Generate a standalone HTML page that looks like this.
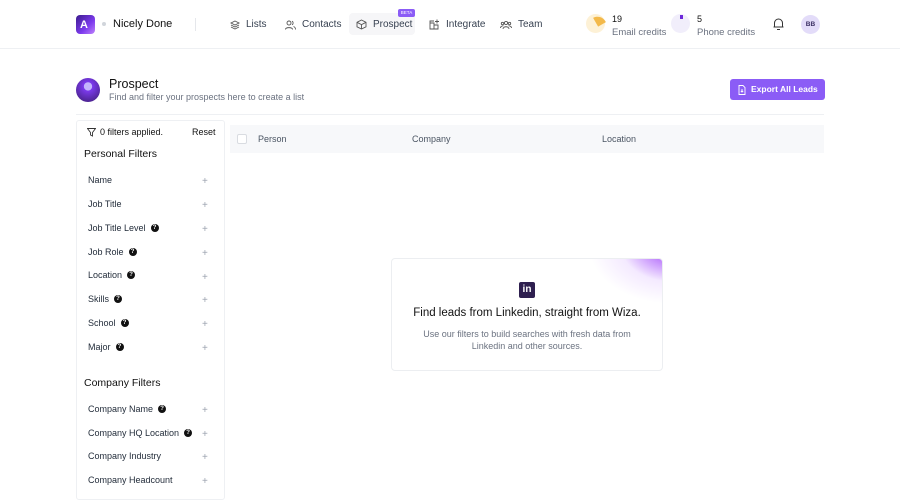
<!DOCTYPE html>
<html><head><meta charset="utf-8"><style>
*{box-sizing:border-box;margin:0;padding:0}
body{width:900px;height:484px;overflow:hidden;background:#fff;font-family:"Liberation Sans",sans-serif;color:#1f2937;position:relative}
.a{position:absolute}
.nav{font-size:10px;color:#374151;display:flex;align-items:center;gap:6px}
.f{position:absolute;left:88px;font-size:9px;color:#1f2937;display:flex;align-items:center;gap:5px}
.q{width:8px;height:8px;border-radius:50%;background:#111;color:#fff;font-size:6px;font-weight:bold;display:inline-flex;align-items:center;justify-content:center}
.p{position:absolute;left:202px;font-size:10px;color:#9ca3af}
</style></head><body>
<div class="a" style="left:0;top:48px;width:900px;height:1px;background:#eef0f3"></div>
<div class="a" style="left:76px;top:15px;width:19px;height:19px;border-radius:4px;background:linear-gradient(135deg,#3b1c8c,#7c3aed 60%,#c084fc)"></div>
<div class="a" style="left:80px;top:19px;color:#fff;font-size:11px;font-weight:bold">A</div>
<div class="a" style="left:102px;top:22px;width:4px;height:4px;border-radius:50%;background:#d1d5db"></div>
<div class="a" style="left:113px;top:18px;font-size:11px;color:#111">Nicely Done</div>
<div class="a" style="left:195px;top:18px;width:1px;height:13px;background:#e5e7eb"></div>
<div class="a nav" style="left:230px;top:19px"><svg width="10" height="10" viewBox="0 0 10 10" fill="none" stroke="#555" stroke-width=".9"><path d="M5 1 9 3 5 5 1 3Z M1 5 5 7 9 5 M1 7 5 9 9 7"/></svg>Lists</div>
<div class="a nav" style="left:285px;top:19px"><svg width="11" height="10" viewBox="0 0 11 10" fill="none" stroke="#555" stroke-width=".9"><circle cx="4" cy="3" r="2"/><path d="M0.5 9.5c0-2.5 7-2.5 7 0M7 1.2a2 2 0 010 3.6M8.5 6.5c1.5.5 2 1.5 2 3"/></svg>Contacts</div>
<div class="a" style="left:349px;top:13px;width:66px;height:22px;background:#f6f6f8;border-radius:4px"></div>
<div class="a" style="left:398px;top:9px;width:17px;height:8px;background:#8b5cf6;border-radius:2px;color:#fff;font-size:4.5px;text-align:center;line-height:8px">BETA</div>
<div class="a nav" style="left:356px;top:19px"><svg width="11" height="11" viewBox="0 0 11 11" fill="none" stroke="#555" stroke-width=".9"><path d="M5.5 1 10 3.3v4.5L5.5 10 1 7.8V3.3Z M1 3.3 5.5 5.6 10 3.3M5.5 5.6V10"/></svg>Prospect</div>
<div class="a nav" style="left:429px;top:19px"><svg width="11" height="11" viewBox="0 0 11 11" fill="none" stroke="#555" stroke-width=".9"><path d="M1 4h4v6H1zM5 6h4v4H5zM1 4V2h4M8 0.5v4M6 2.5h4"/></svg>Integrate</div>
<div class="a nav" style="left:500px;top:19px"><svg width="12" height="10" viewBox="0 0 12 10" fill="none" stroke="#555" stroke-width=".9"><circle cx="6" cy="3" r="1.6"/><circle cx="2.5" cy="3.5" r="1.2"/><circle cx="9.5" cy="3.5" r="1.2"/><path d="M3 9c0-3 6-3 6 0M0.5 8c0-2 2.5-2.3 3-2M11.5 8c0-2-2.5-2.3-3-2"/></svg>Team</div>
<div class="a" style="left:586px;top:14px;width:19px;height:19px;border-radius:50%;background:#fdf1d6"></div>
<div class="a" style="left:595px;top:15px;width:9px;height:10px;border-radius:0 9px 0 0;background:#f3b94a;transform:rotate(-30deg)"></div>
<div class="a" style="left:612px;top:14px;font-size:9px;color:#111">19</div>
<div class="a" style="left:612px;top:27px;font-size:9.5px;color:#6b7280">Email credits</div>
<div class="a" style="left:671px;top:14px;width:19px;height:19px;border-radius:50%;background:#f1eefb"></div>
<div class="a" style="left:680px;top:15px;width:3px;height:4px;background:#6d28d9"></div>
<div class="a" style="left:697px;top:14px;font-size:9px;color:#111">5</div>
<div class="a" style="left:697px;top:27px;font-size:9.5px;color:#6b7280">Phone credits</div>
<svg class="a" style="left:772px;top:17px" width="13" height="14" viewBox="0 0 13 14" fill="none" stroke="#333" stroke-width="1"><path d="M2.5 10V6a4 4 0 018 0v4H2.5zM1.5 10h10M5 12.5h3"/></svg>
<div class="a" style="left:801px;top:15px;width:19px;height:19px;border-radius:50%;background:#e3dcf9;font-size:6.5px;font-weight:bold;color:#3b2f63;text-align:center;line-height:19px">BB</div>

<div class="a" style="left:76px;top:78px;width:24px;height:24px;border-radius:50%;background:radial-gradient(circle at 50% 35%,#c4b5fd 0 20%,#7c3aed 22%,#3b1c70)"></div>
<div class="a" style="left:109px;top:77px;font-size:12.5px;color:#111">Prospect</div>
<div class="a" style="left:109px;top:92px;font-size:9px;color:#6b7280">Find and filter your prospects here to create a list</div>
<div class="a" style="left:730px;top:79px;width:95px;height:21px;background:#8b5cf6;border-radius:3px;color:#fff;font-size:8.5px;font-weight:bold;line-height:21px;padding-left:21px;white-space:nowrap">Export All Leads</div>
<svg class="a" style="left:738px;top:85px" width="8" height="10" viewBox="0 0 8 10" fill="none" stroke="#fff" stroke-width=".9"><path d="M1 .5h4l2 2v7H1z M4 4v3M2.8 6 4 7 5.2 6"/></svg>
<div class="a" style="left:76px;top:114px;width:748px;height:1px;background:#eef0f3"></div>

<div class="a" style="left:76px;top:120px;width:149px;height:380px;border:1px solid #eef0f3;border-radius:3px"></div>
<svg class="a" style="left:87px;top:128px" width="9" height="9" viewBox="0 0 9 9" fill="none" stroke="#333" stroke-width=".9"><path d="M.5.5h8L5.5 4.5V8L3.5 7V4.5Z"/></svg>
<div class="a" style="left:100px;top:127px;font-size:9px;color:#111">0 filters applied.</div>
<div class="a" style="left:192px;top:127px;font-size:9px;color:#111">Reset</div>
<div class="a" style="left:84px;top:148px;font-size:10.5px;color:#111">Personal Filters</div>
<div class="f" style="top:175px">Name</div><div class="p" style="top:176px">+</div>
<div class="f" style="top:199px">Job Title</div><div class="p" style="top:200px">+</div>
<div class="f" style="top:223px">Job Title Level <span class="q">?</span></div><div class="p" style="top:224px">+</div>
<div class="f" style="top:247px">Job Role <span class="q">?</span></div><div class="p" style="top:248px">+</div>
<div class="f" style="top:270px">Location <span class="q">?</span></div><div class="p" style="top:272px">+</div>
<div class="f" style="top:294px">Skills <span class="q">?</span></div><div class="p" style="top:295px">+</div>
<div class="f" style="top:318px">School <span class="q">?</span></div><div class="p" style="top:319px">+</div>
<div class="f" style="top:342px">Major <span class="q">?</span></div><div class="p" style="top:343px">+</div>
<div class="a" style="left:84px;top:377px;font-size:10.5px;color:#111">Company Filters</div>
<div class="f" style="top:404px">Company Name <span class="q">?</span></div><div class="p" style="top:405px">+</div>
<div class="f" style="top:428px">Company HQ Location <span class="q">?</span></div><div class="p" style="top:429px">+</div>
<div class="f" style="top:451px">Company Industry</div><div class="p" style="top:452px">+</div>
<div class="f" style="top:475px">Company Headcount</div><div class="p" style="top:476px">+</div>

<div class="a" style="left:230px;top:125px;width:594px;height:28px;background:#f7f8fa"></div>
<div class="a" style="left:237px;top:134px;width:10px;height:10px;border:1px solid #d9dce1;border-radius:2px;background:#fff"></div>
<div class="a" style="left:258px;top:134px;font-size:9px;color:#4b5563">Person</div>
<div class="a" style="left:412px;top:134px;font-size:9px;color:#4b5563">Company</div>
<div class="a" style="left:602px;top:134px;font-size:9px;color:#4b5563">Location</div>

<div class="a" style="left:391px;top:258px;width:272px;height:113px;border:1px solid #eceef1;border-radius:4px;overflow:hidden;background:#fff">
<div class="a" style="left:190px;top:-40px;width:120px;height:90px;background:radial-gradient(ellipse at 75% 30%,#a855f7 0,#c084fc 18%,rgba(233,213,255,.5) 40%,rgba(255,255,255,0) 65%)"></div>
</div>
<div class="a" style="left:519px;top:282px;width:16px;height:16px;background:#2e1f4f;border-radius:2px;color:#fff;font-size:10px;font-weight:bold;text-align:center;line-height:16px">in</div>
<div class="a" style="left:391px;top:307px;width:272px;text-align:center;font-size:11.5px;color:#111">Find leads from Linkedin, straight from Wiza.</div>
<div class="a" style="left:391px;top:328px;width:272px;text-align:center;font-size:9px;color:#6b7280;line-height:12px">Use our filters to build searches with fresh data from<br>Linkedin and other sources.</div>
</body></html>
